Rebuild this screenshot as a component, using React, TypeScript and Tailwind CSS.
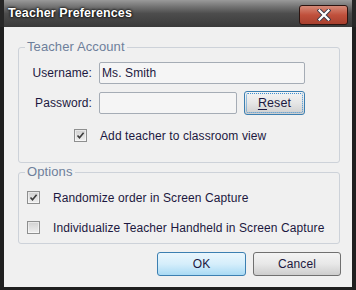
import React from "react";

function CheckBox({ checked }: { checked?: boolean }) {
  return (
    <div className="w-[13px] h-[13px] shrink-0 border border-[#8e8f8f] bg-gradient-to-b from-[#e6e6e6] to-[#f7f7f7] flex items-center justify-center">
      <div className="w-[9px] h-[9px] bg-gradient-to-b from-[#d4d4d4] to-[#ececec] flex items-center justify-center">
        {checked && (
          <svg width="9" height="9" viewBox="0 0 9 9">
            <path d="M1.5 4.5 L3.5 6.8 L7.6 1.8" fill="none" stroke="#3b3b3b" strokeWidth="1.6" />
          </svg>
        )}
      </div>
    </div>
  );
}

function GroupBox({ title, className, children }: { title: string; className: string; children: React.ReactNode }) {
  return (
    <div className={`relative border border-[#cdd2d9] rounded-[3px] ${className}`}>
      <span className="absolute -top-[10px] left-[6px] px-[2px] bg-[#f0f0f0] text-[13px] leading-[18px] text-[#6e7f9b]">
        {title}
      </span>
      {children}
    </div>
  );
}

export default function App() {
  return (
    <div
      className="w-[356px] h-[290px] bg-[#1f1f1f] flex flex-col overflow-hidden text-[12px] tracking-[0.1px] text-[#1c1840]"
      style={{ fontFamily: '"Liberation Sans", Arial, sans-serif' }}
    >
      {/* title bar */}
      <div className="h-[27px] shrink-0 flex items-start bg-gradient-to-b from-[#9a9a9a] via-[#4d4d4d] to-[#3a3a3a] border-l-[4px] border-r-[4px] border-[#262626]">
        <span className="mt-[6px] ml-[4px] font-bold text-white text-[12.5px] leading-[15px] [text-shadow:0_0_2px_#000,0_0_3px_#000]">
          Teacher Preferences
        </span>
        <div className="ml-auto mt-[5px] mr-[4px] w-[49px] h-[20px] rounded-[3px] border border-[#2d1410] bg-gradient-to-b from-[#d58a78] via-[#c0503c] to-[#a8402e] flex items-center justify-center">
          <svg width="14" height="12" viewBox="0 0 14 12">
            <path d="M2.5 1.5 L11.5 10.5 M11.5 1.5 L2.5 10.5" stroke="#3a3a4a" strokeWidth="4" strokeLinecap="square" />
            <path d="M2.5 1.5 L11.5 10.5 M11.5 1.5 L2.5 10.5" stroke="#ffffff" strokeWidth="2.2" strokeLinecap="square" />
          </svg>
        </div>
      </div>

      {/* content */}
      <div className="mx-[4px] h-[260px] shrink-0 bg-[#f0f0f0] pl-[14px] pr-[12px] pt-[20px]">
        <GroupBox title="Teacher Account" className="h-[116px] pt-[14px]">
          <div className="flex items-center h-[22px]">
            <span className="w-[73px] text-right">Username:</span>
            <div className="ml-[7px] w-[206px] h-[22px] border border-[#a5acb5] rounded-[2px] bg-[#f5f5f5] flex items-center pl-[2px]">
              Ms. Smith
            </div>
          </div>
          <div className="flex items-center h-[24px] mt-[7px]">
            <span className="w-[73px] text-right">Password:</span>
            <div className="ml-[7px] w-[138px] h-[22px] border border-[#a5acb5] rounded-[2px] bg-[#f5f5f5]" />
            <div className="ml-[7px] w-[61px] h-[24px] rounded-[3px] border border-[#3c7fb1] bg-gradient-to-b from-[#f4f4f4] via-[#e6e6e6] to-[#cfcfcf] p-[1px]">
              <div className="w-full h-full border border-dotted border-[#3d8fd0] rounded-[2px] flex items-center justify-center text-[12.5px]">
                <span>
                  <span className="underline underline-offset-2">R</span>eset
                </span>
              </div>
            </div>
          </div>
          <div className="flex items-center h-[13px] mt-[14px] pl-[55px]">
            <CheckBox checked />
            <span className="ml-[13px]">Add teacher to classroom view</span>
          </div>
        </GroupBox>

        <GroupBox title="Options" className="h-[72px] mt-[9px] pt-[18px] pl-[8px]">
          <div className="flex items-center h-[13px]">
            <CheckBox checked />
            <span className="ml-[13px]">Randomize order in Screen Capture</span>
          </div>
          <div className="flex items-center h-[13px] mt-[17px]">
            <CheckBox />
            <span className="ml-[13px]">Individualize Teacher Handheld in Screen Capture</span>
          </div>
        </GroupBox>

        <div className="flex justify-end gap-[7px] mt-[8px] pr-[-1px] -mr-[1px]">
          <div className="w-[89px] h-[24px] rounded-[3px] border border-[#3c7fb1] bg-gradient-to-b from-[#eaf6fd] via-[#d5eefb] to-[#a9daf4] flex items-center justify-center">
            OK
          </div>
          <div className="w-[88px] h-[24px] rounded-[3px] border border-[#707070] bg-gradient-to-b from-[#f4f4f4] via-[#e8e8e8] to-[#cdcdcd] flex items-center justify-center">
            Cancel
          </div>
        </div>
      </div>
    </div>
  );
}
